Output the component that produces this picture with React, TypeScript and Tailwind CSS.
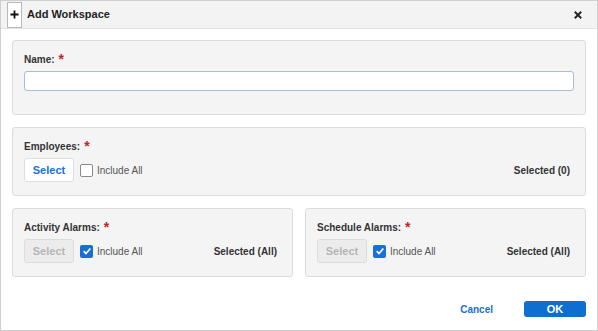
const font = { fontFamily: '"Liberation Sans", Arial, sans-serif' };

function Label({ text }: { text: string }) {
  return (
    <div className="flex items-start text-[10px] font-bold text-[#333] leading-[14px]">
      {text}
      <span className="ml-[4px] text-[#c0262d] text-[14px] leading-[12px]">*</span>
    </div>
  );
}

function Checkbox({ checked }: { checked: boolean }) {
  if (checked) {
    return (
      <span className="block w-[13px] h-[13px] rounded-[2px] bg-[#1a6fd6] flex items-center justify-center">
        <svg viewBox="0 0 12 12" className="w-[10px] h-[10px]">
          <path d="M2 6.2 L4.8 9 L10 3" fill="none" stroke="#fff" strokeWidth="2" />
        </svg>
      </span>
    );
  }
  return <span className="block w-[13px] h-[13px] rounded-[2px] border border-[#8a8a8a] bg-white" />;
}

function PickerRow({
  disabled,
  checked,
  selected,
}: {
  disabled: boolean;
  checked: boolean;
  selected: string;
}) {
  return (
    <div className="flex items-center mt-[4px]">
      <button
        className={`w-[50px] h-[24px] rounded-[3px] text-[11px] font-bold ${
          disabled
            ? "bg-[#ececec] border border-[#dcdcdc] text-[#b5b5b5]"
            : "bg-white border border-[#dedede] text-[#1a6fd6]"
        }`}
      >
        Select
      </button>
      <span className="ml-[6px]">
        <Checkbox checked={checked} />
      </span>
      <span className="ml-[4px] text-[10px] text-[#555]">Include All</span>
      <span className="ml-auto text-[10px] font-bold text-[#333]">{selected}</span>
    </div>
  );
}

export default function App() {
  return (
    <div style={font} className="w-[598px] h-[331px] bg-white border border-[#cfcfcf] flex flex-col">
      <div className="h-[28px] bg-[#f3f3f3] border-b border-[#e2e2e2] flex items-center">
        <div className="ml-[6px] w-[15px] h-[26px] border border-[#b9b9b9] bg-white flex items-center justify-center">
          <svg viewBox="0 0 10 10" className="w-[9px] h-[9px]">
            <path d="M5 0.5 V9.5 M0.5 5 H9.5" stroke="#111" strokeWidth="2" />
          </svg>
        </div>
        <span className="ml-[5px] text-[11px] font-bold text-[#222]">Add Workspace</span>
        <svg viewBox="0 0 10 10" className="ml-auto mr-[15px] w-[8px] h-[8px]">
          <path d="M1 1 L9 9 M9 1 L1 9" stroke="#222" strokeWidth="2.4" />
        </svg>
      </div>

      <div className="px-[11px] pt-[11px] flex flex-col gap-[12px]">
        <div className="h-[75px] bg-[#f4f4f4] border border-[#dcdcdc] rounded-[3px] px-[11px] pt-[12px]">
          <Label text="Name:" />
          <div className="mt-[4px] h-[20px] bg-white border border-[#a9bdd3] rounded-[3px]" />
        </div>

        <div className="h-[69px] bg-[#f4f4f4] border border-[#dcdcdc] rounded-[3px] pl-[11px] pt-[12px] pr-[15px]">
          <Label text="Employees:" />
          <PickerRow disabled={false} checked={false} selected="Selected (0)" />
        </div>

        <div className="flex gap-[12px]">
          <div className="flex-1 h-[69px] bg-[#f4f4f4] border border-[#dcdcdc] rounded-[3px] pl-[11px] pt-[12px] pr-[15px]">
            <Label text="Activity Alarms:" />
            <PickerRow disabled checked selected="Selected (All)" />
          </div>
          <div className="flex-1 h-[69px] bg-[#f4f4f4] border border-[#dcdcdc] rounded-[3px] pl-[11px] pt-[12px] pr-[15px]">
            <Label text="Schedule Alarms:" />
            <PickerRow disabled checked selected="Selected (All)" />
          </div>
        </div>
      </div>

      <div className="mt-auto mb-[13px] flex items-center justify-end pr-[11px]">
        <button className="text-[10px] font-bold text-[#1a6fd6] mr-[31px]">Cancel</button>
        <button className="w-[62px] h-[16px] rounded-[3px] bg-[#0f6fd0] text-white text-[11px] font-bold leading-none">
          OK
        </button>
      </div>
    </div>
  );
}
